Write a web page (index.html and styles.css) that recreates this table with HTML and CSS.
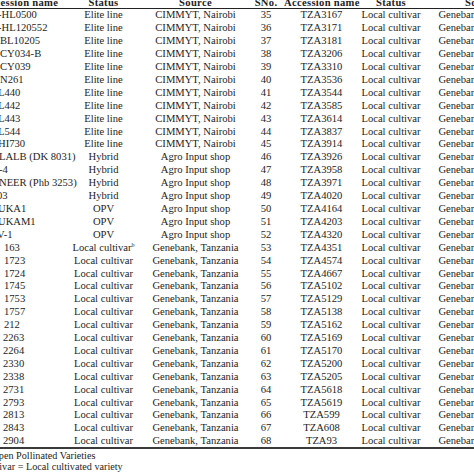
FILE: index.html
```html
<!DOCTYPE html>
<html>
<head>
<meta charset="utf-8">
<link rel="stylesheet" href="styles.css">
</head>
<body>
<div class="sheet">
  <div class="row head">
    <span class="cut">Accession name</span><span>Status</span><span>Source</span><span>SNo.</span><span>Accession name</span><span>Status</span><span>Source</span>
  </div>
  <div class="tbody">
    <div class="row"><span class="k2">-HL0500</span><span>Elite line</span><span>CIMMYT, Nairobi</span><span>35</span><span>TZA3167</span><span>Local cultivar</span><span>Genebank, Tanzania</span></div>
    <div class="row"><span class="k2">-HL120552</span><span>Elite line</span><span>CIMMYT, Nairobi</span><span>36</span><span>TZA3171</span><span>Local cultivar</span><span>Genebank, Tanzania</span></div>
    <div class="row"><span>BL10205</span><span>Elite line</span><span>CIMMYT, Nairobi</span><span>37</span><span>TZA3181</span><span>Local cultivar</span><span>Genebank, Tanzania</span></div>
    <div class="row"><span>CY034-B</span><span>Elite line</span><span>CIMMYT, Nairobi</span><span>38</span><span>TZA3206</span><span>Local cultivar</span><span>Genebank, Tanzania</span></div>
    <div class="row"><span>CY039</span><span>Elite line</span><span>CIMMYT, Nairobi</span><span>39</span><span>TZA3310</span><span>Local cultivar</span><span>Genebank, Tanzania</span></div>
    <div class="row"><span>N261</span><span>Elite line</span><span>CIMMYT, Nairobi</span><span>40</span><span>TZA3536</span><span>Local cultivar</span><span>Genebank, Tanzania</span></div>
    <div class="row"><span class="k2">L440</span><span>Elite line</span><span>CIMMYT, Nairobi</span><span>41</span><span>TZA3544</span><span>Local cultivar</span><span>Genebank, Tanzania</span></div>
    <div class="row"><span class="k2">L442</span><span>Elite line</span><span>CIMMYT, Nairobi</span><span>42</span><span>TZA3585</span><span>Local cultivar</span><span>Genebank, Tanzania</span></div>
    <div class="row"><span class="k2">L443</span><span>Elite line</span><span>CIMMYT, Nairobi</span><span>43</span><span>TZA3614</span><span>Local cultivar</span><span>Genebank, Tanzania</span></div>
    <div class="row"><span class="k2">L544</span><span>Elite line</span><span>CIMMYT, Nairobi</span><span>44</span><span>TZA3837</span><span>Local cultivar</span><span>Genebank, Tanzania</span></div>
    <div class="row"><span class="k2">HI730</span><span>Elite line</span><span>CIMMYT, Nairobi</span><span>45</span><span>TZA3914</span><span>Local cultivar</span><span>Genebank, Tanzania</span></div>
    <div class="row"><span class="k1">LALB (DK 8031)</span><span>Hybrid</span><span>Agro Input shop</span><span>46</span><span>TZA3926</span><span>Local cultivar</span><span>Genebank, Tanzania</span></div>
    <div class="row"><span class="k1">-4</span><span>Hybrid</span><span>Agro Input shop</span><span>47</span><span>TZA3958</span><span>Local cultivar</span><span>Genebank, Tanzania</span></div>
    <div class="row"><span class="k1">NEER (Phb 3253)</span><span>Hybrid</span><span>Agro Input shop</span><span>48</span><span>TZA3971</span><span>Local cultivar</span><span>Genebank, Tanzania</span></div>
    <div class="row"><span class="k3">03</span><span>Hybrid</span><span>Agro Input shop</span><span>49</span><span>TZA4020</span><span>Local cultivar</span><span>Genebank, Tanzania</span></div>
    <div class="row"><span class="k2">UKA1</span><span>OPV</span><span>Agro Input shop</span><span>50</span><span>TZA4164</span><span>Local cultivar</span><span>Genebank, Tanzania</span></div>
    <div class="row"><span class="k2">UKAM1</span><span>OPV</span><span>Agro Input shop</span><span>51</span><span>TZA4203</span><span>Local cultivar</span><span>Genebank, Tanzania</span></div>
    <div class="row"><span class="k3">V-1</span><span>OPV</span><span>Agro Input shop</span><span>52</span><span>TZA4320</span><span>Local cultivar</span><span>Genebank, Tanzania</span></div>
    <div class="row"><span class="p4">163</span><span>Local cultivar<sup class="fn">b</sup></span><span>Genebank, Tanzania</span><span>53</span><span>TZA4351</span><span>Local cultivar</span><span>Genebank, Tanzania</span></div>
    <div class="row"><span class="p4">1723</span><span>Local cultivar</span><span>Genebank, Tanzania</span><span>54</span><span>TZA4574</span><span>Local cultivar</span><span>Genebank, Tanzania</span></div>
    <div class="row"><span class="p4">1724</span><span>Local cultivar</span><span>Genebank, Tanzania</span><span>55</span><span>TZA4667</span><span>Local cultivar</span><span>Genebank, Tanzania</span></div>
    <div class="row"><span class="p4">1745</span><span>Local cultivar</span><span>Genebank, Tanzania</span><span>56</span><span>TZA5102</span><span>Local cultivar</span><span>Genebank, Tanzania</span></div>
    <div class="row"><span class="p4">1753</span><span>Local cultivar</span><span>Genebank, Tanzania</span><span>57</span><span>TZA5129</span><span>Local cultivar</span><span>Genebank, Tanzania</span></div>
    <div class="row"><span class="p4">1757</span><span>Local cultivar</span><span>Genebank, Tanzania</span><span>58</span><span>TZA5138</span><span>Local cultivar</span><span>Genebank, Tanzania</span></div>
    <div class="row"><span class="p4">212</span><span>Local cultivar</span><span>Genebank, Tanzania</span><span>59</span><span>TZA5162</span><span>Local cultivar</span><span>Genebank, Tanzania</span></div>
    <div class="row"><span class="p3">2263</span><span>Local cultivar</span><span>Genebank, Tanzania</span><span>60</span><span>TZA5169</span><span>Local cultivar</span><span>Genebank, Tanzania</span></div>
    <div class="row"><span class="p3">2264</span><span>Local cultivar</span><span>Genebank, Tanzania</span><span>61</span><span>TZA5170</span><span>Local cultivar</span><span>Genebank, Tanzania</span></div>
    <div class="row"><span class="p3">2330</span><span>Local cultivar</span><span>Genebank, Tanzania</span><span>62</span><span>TZA5200</span><span>Local cultivar</span><span>Genebank, Tanzania</span></div>
    <div class="row"><span class="p3">2338</span><span>Local cultivar</span><span>Genebank, Tanzania</span><span>63</span><span>TZA5205</span><span>Local cultivar</span><span>Genebank, Tanzania</span></div>
    <div class="row"><span class="p3">2731</span><span>Local cultivar</span><span>Genebank, Tanzania</span><span>64</span><span>TZA5618</span><span>Local cultivar</span><span>Genebank, Tanzania</span></div>
    <div class="row"><span class="p3">2793</span><span>Local cultivar</span><span>Genebank, Tanzania</span><span>65</span><span>TZA5619</span><span>Local cultivar</span><span>Genebank, Tanzania</span></div>
    <div class="row"><span class="p3">2813</span><span>Local cultivar</span><span>Genebank, Tanzania</span><span>66</span><span>TZA599</span><span>Local cultivar</span><span>Genebank, Tanzania</span></div>
    <div class="row"><span class="p3">2843</span><span>Local cultivar</span><span>Genebank, Tanzania</span><span>67</span><span>TZA608</span><span>Local cultivar</span><span>Genebank, Tanzania</span></div>
    <div class="row"><span class="p3">2904</span><span>Local cultivar</span><span>Genebank, Tanzania</span><span>68</span><span>TZA93</span><span>Local cultivar</span><span>Genebank, Tanzania</span></div>
  </div>
  <div class="rule"></div>
  <div class="notes">
    <p class="n1">Open Pollinated Varieties</p>
    <p class="n2">cultivar = Local cultivated variety</p>
  </div>
</div>
</body>
</html>
```

FILE: styles.css
```css
html, body {
  margin: 0;
  padding: 0;
  overflow: hidden;
  background: #ffffff;
}

body {
  font-family: "Liberation Serif", "Times New Roman", serif;
  font-size: 10.6px;
  color: #1e1e1e;
}

.sheet {
  width: 540px;
  margin-top: -2px;
}

.row {
  display: grid;
  grid-template-columns: 64px 79px 105px 36px 75px 64px 117px;
  white-space: nowrap;
}

.row > span {
  text-align: center;
}

.row > span:first-child {
  text-align: left;
}

.head {
  line-height: 10px;
  font-weight: bold;
  letter-spacing: 0.3px;
  border-bottom: 1px solid #222;
}

.head .cut {
  text-indent: -17.5px;
}

.tbody {
  padding-top: 0.4px;
}

.tbody .row {
  line-height: 12.9px;
}

.k1 { text-indent: -1px; }
.k2 { text-indent: -2px; }
.k3 { text-indent: -3px; }
.p3 { padding-left: 3px; }
.p4 { padding-left: 4px; }

.fn {
  font-size: 6px;
  line-height: 0;
  vertical-align: 4px;
}

.rule {
  border-top: 2px solid #3a3a3a;
  margin-top: -1px;
}

.notes {
  padding-top: 2px;
  font-size: 10.2px;
  line-height: 10.4px;
  white-space: nowrap;
}

.notes p {
  margin: 0;
}

.n1 {
  text-indent: -8.5px;
}

.n2 {
  text-indent: -16px;
}
```
